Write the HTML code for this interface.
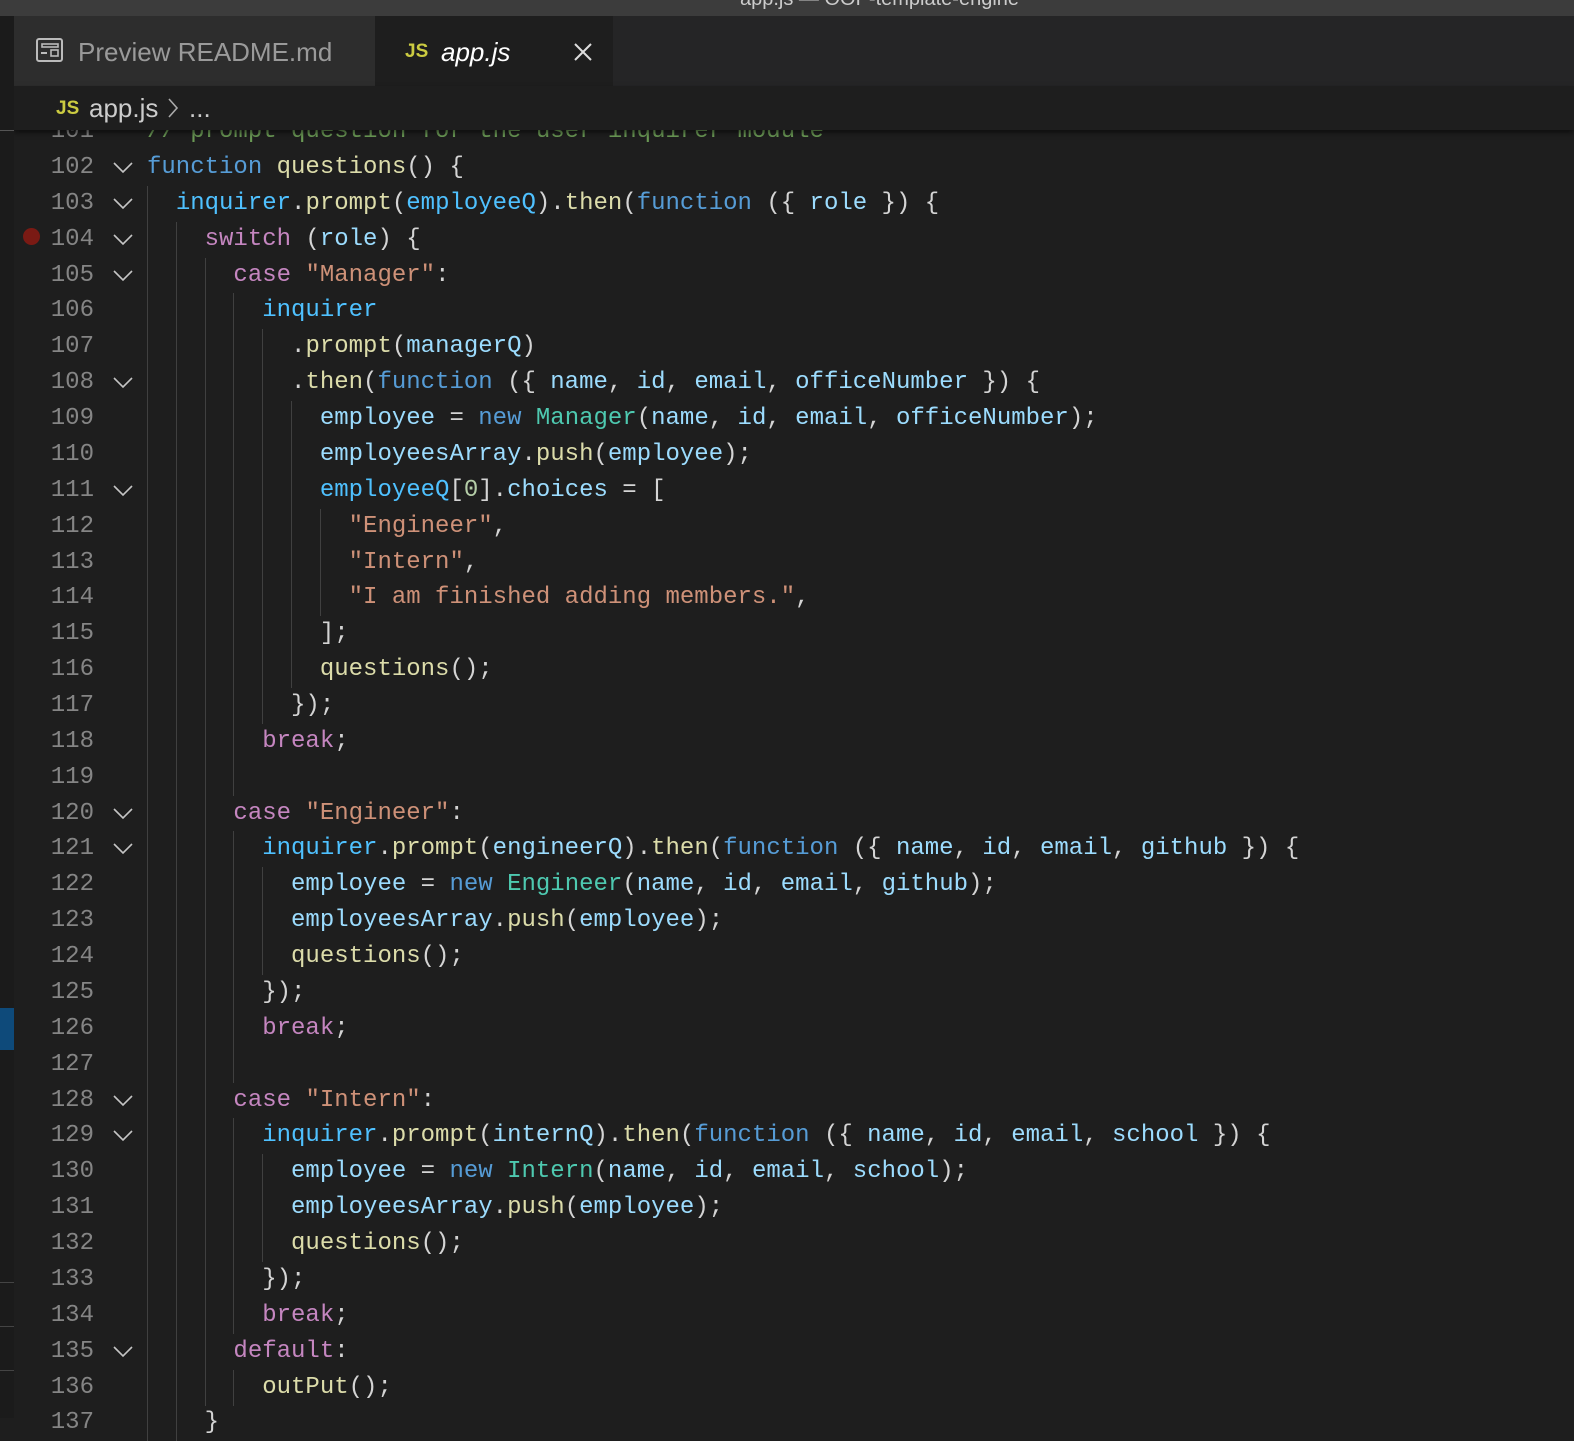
<!DOCTYPE html>
<html><head><meta charset="utf-8"><style>
body{margin:0;width:1574px;height:1418px;background:#1e1e1e;overflow:hidden;position:relative;font-family:"Liberation Mono",monospace;}
.title{position:absolute;left:0;top:0;width:1574px;height:16px;background:#3c3c3c;overflow:hidden;}
.title span{position:absolute;left:740px;top:-12px;font:20px "Liberation Sans",sans-serif;color:#ccc;}
.tabs{position:absolute;left:14px;top:16px;width:1560px;height:70px;background:#252526;}
.tab1{position:absolute;left:0;top:0;width:361px;height:70px;background:#2d2d2d;}
.tab2{position:absolute;left:361px;top:0;width:238px;height:70px;background:#1e1e1e;}
.bc{position:absolute;left:14px;top:86px;width:1560px;height:44px;background:#1e1e1e;z-index:5;box-shadow:0 3px 5px rgba(0,0,0,.5);}
.left{position:absolute;left:0;top:16px;width:14px;height:1402px;background:#1b1b1b;z-index:6;}
.ln{position:absolute;left:0;margin-top:2px;width:1574px;height:36px;line-height:36px;font-size:24px;color:#d4d4d4;white-space:pre;}
.ln .no{position:absolute;left:20px;width:74px;text-align:right;color:#858585;}
.ln .code{position:absolute;left:147px;}
.ln i{position:absolute;top:0;width:1px;height:36px;background:#404040;}
.ln svg{position:absolute;left:113px;top:12px;}
.k{color:#569cd6}.f{color:#dcdcaa}.c{color:#4fc1ff}.v{color:#9cdcfe}.s{color:#ce9178}.p{color:#c586c0}.t{color:#4ec9b0}.n{color:#b5cea8}.m{color:#6a9955}
</style></head><body>
<div class="title"><span>app.js — OOP-template-engine</span></div>
<div class="left"></div>
<div style="position:absolute;left:0;top:1008px;width:14px;height:42px;background:#0e4a7a;z-index:7"></div>
<div style="position:absolute;left:0;top:1282px;width:14px;height:1px;background:#444;z-index:7"></div>
<div style="position:absolute;left:0;top:1326px;width:14px;height:1px;background:#444;z-index:7"></div>
<div style="position:absolute;left:0;top:1370px;width:14px;height:1px;background:#444;z-index:7"></div>
<div style="position:absolute;left:0;top:130px;width:14px;height:1px;background:#555;z-index:7"></div>
<div class="tabs">
 <div class="tab1">
  <svg style="position:absolute;left:22px;top:22px" width="28" height="24" viewBox="0 0 28 24"><rect x="1" y="1" width="25" height="22" rx="2" fill="none" stroke="#bbb" stroke-width="2"/><rect x="6" y="6" width="16" height="3" fill="none" stroke="#bbb" stroke-width="1.6"/><line x1="5" y1="15" x2="11" y2="15" stroke="#bbb" stroke-width="2"/><rect x="15" y="12" width="7" height="6" fill="none" stroke="#bbb" stroke-width="1.6"/></svg>
  <span style="position:absolute;left:64px;top:21px;font:26px 'Liberation Sans',sans-serif;color:#9a9a9a">Preview README.md</span>
 </div>
 <div class="tab2">
  <span style="position:absolute;left:30px;top:25px;font:bold 19px 'Liberation Sans',sans-serif;color:#cbcb41">JS</span>
  <span style="position:absolute;left:66px;top:21px;font:italic 26px 'Liberation Sans',sans-serif;color:#fff">app.js</span>
  <svg style="position:absolute;left:199px;top:27px" width="18" height="18"><path d="M1 1L17 17M17 1L1 17" stroke="#ddd" stroke-width="2"/></svg>
 </div>
</div>
<div class="bc">
 <span style="position:absolute;left:42px;top:12px;font:bold 19px 'Liberation Sans',sans-serif;color:#cbcb41">JS</span>
 <span style="position:absolute;left:75px;top:7px;font:26px 'Liberation Sans',sans-serif;color:#ccc">app.js</span>
 <svg style="position:absolute;left:153px;top:11px" width="12" height="22"><path d="M2 2L10 11L2 20" stroke="#aaa" stroke-width="1.6" fill="none"/></svg>
 <span style="position:absolute;left:175px;top:7px;font:26px 'Liberation Sans',sans-serif;color:#ccc">...</span>
</div>
<div style="position:absolute;left:23px;top:228px;width:17px;height:17px;border-radius:50%;background:#7a1a14"></div>

<div class="ln" style="top:112px"><span class="no">101</span><span class="code"><span class="m">// prompt question for the user inquirer module</span></span></div>
<div class="ln" style="top:147.9px"><span class="no">102</span><svg width="20" height="12"><path d="M1 1L10 10L19 1" stroke="#c5c5c5" stroke-width="1.6" fill="none"/></svg><span class="code"><span class="k">function</span> <span class="f">questions</span>() {</span></div>
<div class="ln" style="top:183.8px"><span class="no">103</span><svg width="20" height="12"><path d="M1 1L10 10L19 1" stroke="#c5c5c5" stroke-width="1.6" fill="none"/></svg><i style="left:147px"></i><span class="code">  <span class="c">inquirer</span>.<span class="f">prompt</span>(<span class="c">employeeQ</span>).<span class="f">then</span>(<span class="k">function</span> ({ <span class="v">role</span> }) {</span></div>
<div class="ln" style="top:219.6px"><span class="no">104</span><svg width="20" height="12"><path d="M1 1L10 10L19 1" stroke="#c5c5c5" stroke-width="1.6" fill="none"/></svg><i style="left:147px"></i><i style="left:176px"></i><span class="code">    <span class="p">switch</span> (<span class="v">role</span>) {</span></div>
<div class="ln" style="top:255.5px"><span class="no">105</span><svg width="20" height="12"><path d="M1 1L10 10L19 1" stroke="#c5c5c5" stroke-width="1.6" fill="none"/></svg><i style="left:147px"></i><i style="left:176px"></i><i style="left:205px"></i><span class="code">      <span class="p">case</span> <span class="s">"Manager"</span>:</span></div>
<div class="ln" style="top:291.4px"><span class="no">106</span><i style="left:147px"></i><i style="left:176px"></i><i style="left:205px"></i><i style="left:233px"></i><span class="code">        <span class="c">inquirer</span></span></div>
<div class="ln" style="top:327.3px"><span class="no">107</span><i style="left:147px"></i><i style="left:176px"></i><i style="left:205px"></i><i style="left:233px"></i><i style="left:262px"></i><span class="code">          .<span class="f">prompt</span>(<span class="v">managerQ</span>)</span></div>
<div class="ln" style="top:363.1px"><span class="no">108</span><svg width="20" height="12"><path d="M1 1L10 10L19 1" stroke="#c5c5c5" stroke-width="1.6" fill="none"/></svg><i style="left:147px"></i><i style="left:176px"></i><i style="left:205px"></i><i style="left:233px"></i><i style="left:262px"></i><span class="code">          .<span class="f">then</span>(<span class="k">function</span> ({ <span class="v">name</span>, <span class="v">id</span>, <span class="v">email</span>, <span class="v">officeNumber</span> }) {</span></div>
<div class="ln" style="top:399px"><span class="no">109</span><i style="left:147px"></i><i style="left:176px"></i><i style="left:205px"></i><i style="left:233px"></i><i style="left:262px"></i><i style="left:291px"></i><span class="code">            <span class="v">employee</span> = <span class="k">new</span> <span class="t">Manager</span>(<span class="v">name</span>, <span class="v">id</span>, <span class="v">email</span>, <span class="v">officeNumber</span>);</span></div>
<div class="ln" style="top:434.9px"><span class="no">110</span><i style="left:147px"></i><i style="left:176px"></i><i style="left:205px"></i><i style="left:233px"></i><i style="left:262px"></i><i style="left:291px"></i><span class="code">            <span class="v">employeesArray</span>.<span class="f">push</span>(<span class="v">employee</span>);</span></div>
<div class="ln" style="top:470.7px"><span class="no">111</span><svg width="20" height="12"><path d="M1 1L10 10L19 1" stroke="#c5c5c5" stroke-width="1.6" fill="none"/></svg><i style="left:147px"></i><i style="left:176px"></i><i style="left:205px"></i><i style="left:233px"></i><i style="left:262px"></i><i style="left:291px"></i><span class="code">            <span class="c">employeeQ</span>[<span class="n">0</span>].<span class="v">choices</span> = [</span></div>
<div class="ln" style="top:506.6px"><span class="no">112</span><i style="left:147px"></i><i style="left:176px"></i><i style="left:205px"></i><i style="left:233px"></i><i style="left:262px"></i><i style="left:291px"></i><i style="left:320px"></i><span class="code">              <span class="s">"Engineer"</span>,</span></div>
<div class="ln" style="top:542.5px"><span class="no">113</span><i style="left:147px"></i><i style="left:176px"></i><i style="left:205px"></i><i style="left:233px"></i><i style="left:262px"></i><i style="left:291px"></i><i style="left:320px"></i><span class="code">              <span class="s">"Intern"</span>,</span></div>
<div class="ln" style="top:578.4px"><span class="no">114</span><i style="left:147px"></i><i style="left:176px"></i><i style="left:205px"></i><i style="left:233px"></i><i style="left:262px"></i><i style="left:291px"></i><i style="left:320px"></i><span class="code">              <span class="s">"I am finished adding members."</span>,</span></div>
<div class="ln" style="top:614.2px"><span class="no">115</span><i style="left:147px"></i><i style="left:176px"></i><i style="left:205px"></i><i style="left:233px"></i><i style="left:262px"></i><i style="left:291px"></i><span class="code">            ];</span></div>
<div class="ln" style="top:650.1px"><span class="no">116</span><i style="left:147px"></i><i style="left:176px"></i><i style="left:205px"></i><i style="left:233px"></i><i style="left:262px"></i><i style="left:291px"></i><span class="code">            <span class="f">questions</span>();</span></div>
<div class="ln" style="top:686px"><span class="no">117</span><i style="left:147px"></i><i style="left:176px"></i><i style="left:205px"></i><i style="left:233px"></i><i style="left:262px"></i><span class="code">          });</span></div>
<div class="ln" style="top:721.8px"><span class="no">118</span><i style="left:147px"></i><i style="left:176px"></i><i style="left:205px"></i><i style="left:233px"></i><span class="code">        <span class="p">break</span>;</span></div>
<div class="ln" style="top:757.7px"><span class="no">119</span><i style="left:147px"></i><i style="left:176px"></i><i style="left:205px"></i><i style="left:233px"></i></div>
<div class="ln" style="top:793.6px"><span class="no">120</span><svg width="20" height="12"><path d="M1 1L10 10L19 1" stroke="#c5c5c5" stroke-width="1.6" fill="none"/></svg><i style="left:147px"></i><i style="left:176px"></i><i style="left:205px"></i><span class="code">      <span class="p">case</span> <span class="s">"Engineer"</span>:</span></div>
<div class="ln" style="top:829.4px"><span class="no">121</span><svg width="20" height="12"><path d="M1 1L10 10L19 1" stroke="#c5c5c5" stroke-width="1.6" fill="none"/></svg><i style="left:147px"></i><i style="left:176px"></i><i style="left:205px"></i><i style="left:233px"></i><span class="code">        <span class="c">inquirer</span>.<span class="f">prompt</span>(<span class="v">engineerQ</span>).<span class="f">then</span>(<span class="k">function</span> ({ <span class="v">name</span>, <span class="v">id</span>, <span class="v">email</span>, <span class="v">github</span> }) {</span></div>
<div class="ln" style="top:865.3px"><span class="no">122</span><i style="left:147px"></i><i style="left:176px"></i><i style="left:205px"></i><i style="left:233px"></i><i style="left:262px"></i><span class="code">          <span class="v">employee</span> = <span class="k">new</span> <span class="t">Engineer</span>(<span class="v">name</span>, <span class="v">id</span>, <span class="v">email</span>, <span class="v">github</span>);</span></div>
<div class="ln" style="top:901.2px"><span class="no">123</span><i style="left:147px"></i><i style="left:176px"></i><i style="left:205px"></i><i style="left:233px"></i><i style="left:262px"></i><span class="code">          <span class="v">employeesArray</span>.<span class="f">push</span>(<span class="v">employee</span>);</span></div>
<div class="ln" style="top:937.1px"><span class="no">124</span><i style="left:147px"></i><i style="left:176px"></i><i style="left:205px"></i><i style="left:233px"></i><i style="left:262px"></i><span class="code">          <span class="f">questions</span>();</span></div>
<div class="ln" style="top:972.9px"><span class="no">125</span><i style="left:147px"></i><i style="left:176px"></i><i style="left:205px"></i><i style="left:233px"></i><span class="code">        });</span></div>
<div class="ln" style="top:1008.8px"><span class="no">126</span><i style="left:147px"></i><i style="left:176px"></i><i style="left:205px"></i><i style="left:233px"></i><span class="code">        <span class="p">break</span>;</span></div>
<div class="ln" style="top:1044.7px"><span class="no">127</span><i style="left:147px"></i><i style="left:176px"></i><i style="left:205px"></i><i style="left:233px"></i></div>
<div class="ln" style="top:1080.5px"><span class="no">128</span><svg width="20" height="12"><path d="M1 1L10 10L19 1" stroke="#c5c5c5" stroke-width="1.6" fill="none"/></svg><i style="left:147px"></i><i style="left:176px"></i><i style="left:205px"></i><span class="code">      <span class="p">case</span> <span class="s">"Intern"</span>:</span></div>
<div class="ln" style="top:1116.4px"><span class="no">129</span><svg width="20" height="12"><path d="M1 1L10 10L19 1" stroke="#c5c5c5" stroke-width="1.6" fill="none"/></svg><i style="left:147px"></i><i style="left:176px"></i><i style="left:205px"></i><i style="left:233px"></i><span class="code">        <span class="c">inquirer</span>.<span class="f">prompt</span>(<span class="v">internQ</span>).<span class="f">then</span>(<span class="k">function</span> ({ <span class="v">name</span>, <span class="v">id</span>, <span class="v">email</span>, <span class="v">school</span> }) {</span></div>
<div class="ln" style="top:1152.3px"><span class="no">130</span><i style="left:147px"></i><i style="left:176px"></i><i style="left:205px"></i><i style="left:233px"></i><i style="left:262px"></i><span class="code">          <span class="v">employee</span> = <span class="k">new</span> <span class="t">Intern</span>(<span class="v">name</span>, <span class="v">id</span>, <span class="v">email</span>, <span class="v">school</span>);</span></div>
<div class="ln" style="top:1188.2px"><span class="no">131</span><i style="left:147px"></i><i style="left:176px"></i><i style="left:205px"></i><i style="left:233px"></i><i style="left:262px"></i><span class="code">          <span class="v">employeesArray</span>.<span class="f">push</span>(<span class="v">employee</span>);</span></div>
<div class="ln" style="top:1224px"><span class="no">132</span><i style="left:147px"></i><i style="left:176px"></i><i style="left:205px"></i><i style="left:233px"></i><i style="left:262px"></i><span class="code">          <span class="f">questions</span>();</span></div>
<div class="ln" style="top:1259.9px"><span class="no">133</span><i style="left:147px"></i><i style="left:176px"></i><i style="left:205px"></i><i style="left:233px"></i><span class="code">        });</span></div>
<div class="ln" style="top:1295.8px"><span class="no">134</span><i style="left:147px"></i><i style="left:176px"></i><i style="left:205px"></i><i style="left:233px"></i><span class="code">        <span class="p">break</span>;</span></div>
<div class="ln" style="top:1331.6px"><span class="no">135</span><svg width="20" height="12"><path d="M1 1L10 10L19 1" stroke="#c5c5c5" stroke-width="1.6" fill="none"/></svg><i style="left:147px"></i><i style="left:176px"></i><i style="left:205px"></i><span class="code">      <span class="p">default</span>:</span></div>
<div class="ln" style="top:1367.5px"><span class="no">136</span><i style="left:147px"></i><i style="left:176px"></i><i style="left:205px"></i><i style="left:233px"></i><span class="code">        <span class="f">outPut</span>();</span></div>
<div class="ln" style="top:1403.4px"><span class="no">137</span><i style="left:147px"></i><i style="left:176px"></i><span class="code">    }</span></div>
</body></html>
